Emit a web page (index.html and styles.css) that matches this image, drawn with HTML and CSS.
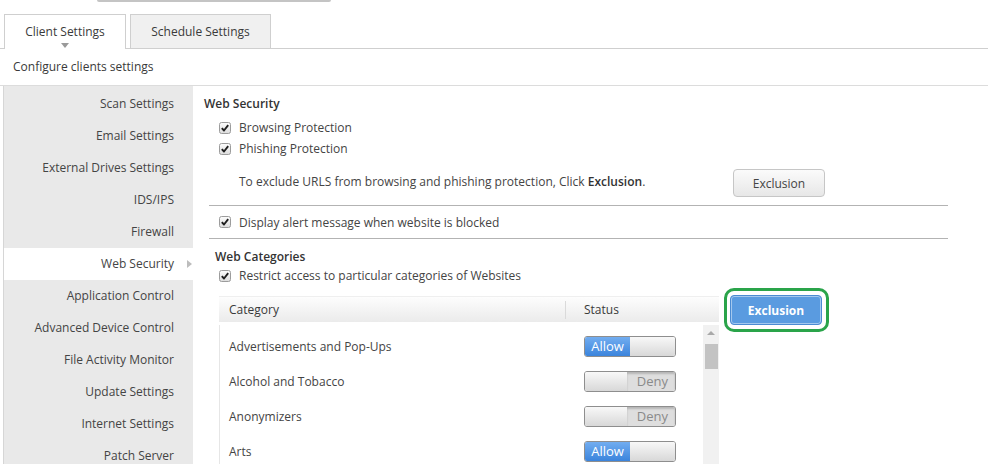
FILE: index.html
```html
<!DOCTYPE html>
<html>
<head>
<meta charset="utf-8">
<link rel="stylesheet" href="styles.css">
</head>
<body>
<div class="topbar"></div>
<div class="tabs">
  <div class="tab active"><span>Client Settings</span><span class="caret"></span></div>
  <div class="tab">Schedule Settings</div>
</div>
<div class="subhead">Configure clients settings</div>
<div class="main">
  <nav class="sidebar">
    <div class="nav-item">Scan Settings</div>
    <div class="nav-item">Email Settings</div>
    <div class="nav-item">External Drives Settings</div>
    <div class="nav-item">IDS/IPS</div>
    <div class="nav-item">Firewall</div>
    <div class="nav-item active"><span>Web Security</span><span class="nav-arrow"></span></div>
    <div class="nav-item">Application Control</div>
    <div class="nav-item">Advanced Device Control</div>
    <div class="nav-item">File Activity Monitor</div>
    <div class="nav-item">Update Settings</div>
    <div class="nav-item">Internet Settings</div>
    <div class="nav-item">Patch Server</div>
  </nav>
  <section class="content">
    <div class="section-title">Web Security</div>
    <div class="checks">
      <div class="check"><svg class="cb" width="12" height="12" viewBox="0 0 12 12"><defs><linearGradient id="g1" x1="0" y1="0" x2="0" y2="1"><stop offset="0" stop-color="#fdfdfd"/><stop offset="1" stop-color="#dcdcdc"/></linearGradient></defs><rect x="0.5" y="0.5" width="11" height="11" rx="2" fill="url(#g1)" stroke="#9c9c9c"/><path d="M2.8 6.2 L5 8.5 L9.2 3.2" fill="none" stroke="#1e1e1e" stroke-width="1.9" stroke-linejoin="round"/></svg><span>Browsing Protection</span></div>
      <div class="check"><svg class="cb" width="12" height="12" viewBox="0 0 12 12"><rect x="0.5" y="0.5" width="11" height="11" rx="2" fill="url(#g1)" stroke="#9c9c9c"/><path d="M2.8 6.2 L5 8.5 L9.2 3.2" fill="none" stroke="#1e1e1e" stroke-width="1.9" stroke-linejoin="round"/></svg><span>Phishing Protection</span></div>
    </div>
    <div class="excl-row">
      <span class="excl-text">To exclude URLS from browsing and phishing protection, Click <b>Exclusion</b>.</span>
      <button class="btn">Exclusion</button>
    </div>
    <div class="divided">
      <div class="check alert"><svg class="cb" width="12" height="12" viewBox="0 0 12 12"><rect x="0.5" y="0.5" width="11" height="11" rx="2" fill="url(#g1)" stroke="#9c9c9c"/><path d="M2.8 6.2 L5 8.5 L9.2 3.2" fill="none" stroke="#1e1e1e" stroke-width="1.9" stroke-linejoin="round"/></svg><span>Display alert message when website is blocked</span></div>
    </div>
    <div class="section-title cats">Web Categories</div>
    <div class="check restrict"><svg class="cb" width="12" height="12" viewBox="0 0 12 12"><rect x="0.5" y="0.5" width="11" height="11" rx="2" fill="url(#g1)" stroke="#9c9c9c"/><path d="M2.8 6.2 L5 8.5 L9.2 3.2" fill="none" stroke="#1e1e1e" stroke-width="1.9" stroke-linejoin="round"/></svg><span>Restrict access to particular categories of Websites</span></div>
    <div class="table-area">
      <div class="table">
        <div class="thead">
          <div class="th-cat">Category</div>
          <div class="th-status">Status</div>
        </div>
        <div class="tbody">
          <div class="rows">
            <div class="row"><div class="cell-cat">Advertisements and Pop-Ups</div><div class="toggle"><span class="half on">Allow</span><span class="half off"></span></div></div>
            <div class="row"><div class="cell-cat">Alcohol and Tobacco</div><div class="toggle"><span class="half off"></span><span class="half deny">Deny</span></div></div>
            <div class="row"><div class="cell-cat">Anonymizers</div><div class="toggle"><span class="half off"></span><span class="half deny">Deny</span></div></div>
            <div class="row"><div class="cell-cat">Arts</div><div class="toggle"><span class="half on">Allow</span><span class="half off"></span></div></div>
          </div>
          <div class="scrollbar"><span class="sb-up"></span><span class="sb-thumb"></span></div>
        </div>
      </div>
      <div class="btn-wrap">
        <button class="btn-primary">Exclusion</button>
      </div>
    </div>
  </section>
</div>
</body>
</html>
```

FILE: styles.css
```css
html, body {
  margin: 0;
  padding: 0;
  height: 464px;
  overflow: hidden;
  background: #fff;
}
body {
  font-family: "Open Sans", "Noto Sans", sans-serif;
  font-size: 12px;
  color: #444;
}
.topbar {
  height: 2px;
  margin-left: 97px;
  width: 234px;
  background: #c4c4c4;
  border-radius: 0 0 4px 4px;
}
.tabs {
  display: flex;
  align-items: flex-end;
  gap: 4px;
  padding: 12px 0 0 4px;
  border-bottom: 1px solid #cfcfcf;
}
.tab {
  box-sizing: border-box;
  height: 34px;
  width: 141px;
  border: 1px solid #cfcfcf;
  border-bottom: none;
  background: #f0f0f0;
  padding-top: 9px;
  line-height: 16px;
  text-align: center;
  color: #3a3a3a;
}
.tab.active {
  width: 122px;
  height: 35px;
  margin-bottom: -1px;
  background: #fff;
  display: flex;
  flex-direction: column;
  align-items: center;
}
.caret {
  margin-top: 3px;
  width: 0;
  height: 0;
  border-left: 4px solid transparent;
  border-right: 4px solid transparent;
  border-top: 5px solid #9a9a9a;
}
.subhead {
  height: 36px;
  line-height: 36px;
  padding-left: 13px;
  border-bottom: 1px solid #dcdcdc;
  color: #3a3a3a;
}
.main {
  display: flex;
  align-items: stretch;
  height: 378px;
  overflow: hidden;
}
.sidebar {
  box-sizing: border-box;
  margin-left: 3px;
  width: 190px;
  border-left: 1px solid #d6d6d6;
  background: #e9e9e9;
  padding-top: 2px;
}
.nav-item {
  height: 32px;
  line-height: 32px;
  display: flex;
  justify-content: flex-end;
  align-items: center;
  padding-right: 19px;
  color: #444;
}
.nav-item.active {
  background: #fff;
  padding-right: 1px;
}
.nav-arrow {
  margin-left: 13px;
  width: 0;
  height: 0;
  border-top: 4px solid transparent;
  border-bottom: 4px solid transparent;
  border-left: 5px solid #bdbdbd;
}
.content {
  flex: 1;
  padding: 9px 0 0 11px;
}
.section-title {
  line-height: 18px;
  font-weight: 600;
  color: #333;
}
.checks {
  margin-top: 4px;
  padding-left: 15px;
}
.check {
  display: flex;
  align-items: center;
  gap: 8px;
  height: 21px;
}
.cb {
  flex: none;
  display: block;
}
.excl-row {
  margin-top: 10px;
  padding-left: 35px;
  display: flex;
  align-items: center;
  height: 28px;
}
.excl-text {
  width: 494px;
  flex: none;
  margin-top: -3px;
}
.excl-text b {
  font-weight: 600;
  color: #333;
}
.btn {
  box-sizing: border-box;
  width: 92px;
  height: 28px;
  border: 1px solid #c6c6c6;
  border-radius: 4px;
  background: linear-gradient(#fbfbfb, #e7e7e7);
  font-family: inherit;
  font-size: 12px;
  color: #444;
  padding: 0;
}
.divided {
  margin: 8px 0 0 5px;
  width: 739px;
  border-top: 1px solid #b3b3b3;
  border-bottom: 1px solid #b3b3b3;
}
.check.alert {
  height: 32px;
  padding-left: 10px;
}
.section-title.cats {
  margin-top: 9px;
  padding-left: 11px;
}
.check.restrict {
  height: 19px;
  padding-left: 15px;
}
.table-area {
  display: flex;
  align-items: flex-start;
  margin-top: 11px;
  padding-left: 15px;
}
.table {
  width: 500px;
  flex: none;
}
.thead {
  display: flex;
  align-items: center;
  height: 26px;
  background: linear-gradient(#fdfdfd, #ebebeb);
  border-top: 1px solid #efefef;
  box-sizing: border-box;
}
.th-cat {
  box-sizing: border-box;
  width: 347px;
  padding-left: 10px;
  line-height: 18px;
  border-right: 1px solid #dadada;
  color: #3a3a3a;
}
.th-status {
  padding-left: 18px;
  color: #3a3a3a;
}
.tbody {
  margin-top: 3px;
  display: flex;
  height: 139px;
  border-left: 1px solid #e6e6e6;
}
.rows {
  flex: 1;
  padding-top: 4px;
}
.row {
  display: flex;
  align-items: center;
  height: 35px;
}
.cell-cat {
  box-sizing: border-box;
  width: 364px;
  padding-left: 9px;
}
.toggle {
  box-sizing: border-box;
  display: flex;
  width: 92px;
  height: 21px;
  border: 1px solid #8e8e8e;
  border-radius: 3px;
  overflow: hidden;
  font-size: 13px;
  line-height: 19px;
}
.half {
  flex: 1;
  text-align: center;
}
.half.on {
  background: linear-gradient(#72adf0, #3b84dc);
  color: #fff;
}
.half.off {
  background: linear-gradient(#f8f8f8, #d8d8d8);
}
.half.deny {
  background: #dedede;
  box-shadow: inset 0 2px 2px rgba(0, 0, 0, 0.18);
  color: #8a8a8a;
  text-align: right;
  padding-right: 7px;
}
.scrollbar {
  flex: none;
  width: 16px;
  background: #f1f1f1;
  display: flex;
  flex-direction: column;
  align-items: center;
}
.sb-up {
  margin-top: 6px;
  width: 0;
  height: 0;
  border-left: 4px solid transparent;
  border-right: 4px solid transparent;
  border-bottom: 4px solid #a9a9a9;
}
.sb-thumb {
  margin-top: 9px;
  width: 13px;
  height: 25px;
  background: #c3c3c3;
}
.btn-wrap {
  position: relative;
  margin: -1px 0 0 11px;
}
.btn-wrap::after {
  content: "";
  position: absolute;
  top: -7px;
  bottom: -7px;
  left: -6px;
  right: -7px;
  border: 3px solid #2aa44a;
  border-radius: 10px;
  pointer-events: none;
}
.btn-primary {
  display: block;
  box-sizing: border-box;
  width: 92px;
  height: 30px;
  border: 1px solid #4b8bd3;
  border-radius: 4px;
  background: #5a9be0;
  box-shadow: inset 0 0 0 1px rgba(255, 255, 255, 0.45);
  color: #fff;
  font-family: inherit;
  font-weight: 700;
  font-size: 12px;
  padding: 0;
}
```
